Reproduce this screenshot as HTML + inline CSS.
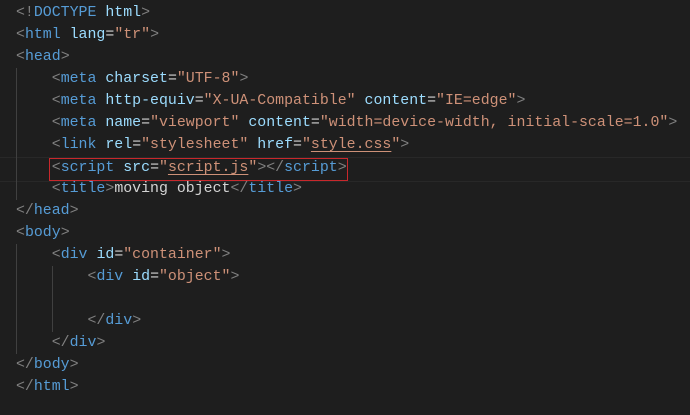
<!DOCTYPE html>
<html><head><style>
body{margin:0;width:690px;height:415px;background:#1e1e1e;overflow:hidden;position:relative;font-family:"Liberation Mono",monospace;font-size:14.9px}
.l{position:absolute;left:16px;height:22px;line-height:22px;white-space:pre;color:#d4d4d4}
.p{color:#808080}.t{color:#569cd6}.a{color:#9cdcfe}.s{color:#ce9178}
.u{text-decoration:underline;text-underline-offset:3px}
.g{position:absolute;width:1px;background:#404040}
</style></head><body>
<div style="position:absolute;left:0;top:157px;width:690px;height:23px;border-top:1px solid #282828;border-bottom:1px solid #282828"></div>
<div class="g" style="left:16px;top:68px;height:132px"></div>
<div class="g" style="left:16px;top:244px;height:110px"></div>
<div class="g" style="left:52px;top:266px;height:66px"></div>
<div class="l" style="top:2px"><span class="p">&lt;!</span><span class="t">DOCTYPE</span> <span class="a">html</span><span class="p">&gt;</span></div>
<div class="l" style="top:24px"><span class="p">&lt;</span><span class="t">html</span> <span class="a">lang</span>=<span class="s">"tr"</span><span class="p">&gt;</span></div>
<div class="l" style="top:46px"><span class="p">&lt;</span><span class="t">head</span><span class="p">&gt;</span></div>
<div class="l" style="top:68px">    <span class="p">&lt;</span><span class="t">meta</span> <span class="a">charset</span>=<span class="s">"UTF-8"</span><span class="p">&gt;</span></div>
<div class="l" style="top:90px">    <span class="p">&lt;</span><span class="t">meta</span> <span class="a">http-equiv</span>=<span class="s">"X-UA-Compatible"</span> <span class="a">content</span>=<span class="s">"IE=edge"</span><span class="p">&gt;</span></div>
<div class="l" style="top:112px">    <span class="p">&lt;</span><span class="t">meta</span> <span class="a">name</span>=<span class="s">"viewport"</span> <span class="a">content</span>=<span class="s">"width=device-width, initial-scale=1.0"</span><span class="p">&gt;</span></div>
<div class="l" style="top:134px">    <span class="p">&lt;</span><span class="t">link</span> <span class="a">rel</span>=<span class="s">"stylesheet"</span> <span class="a">href</span>=<span class="s">"<span class="u">style.css</span>"</span><span class="p">&gt;</span></div>
<div class="l" style="top:157px">    <span class="p">&lt;</span><span class="t">script</span> <span class="a">src</span>=<span class="s">"<span class="u">script.js</span>"</span><span class="p">&gt;&lt;/</span><span class="t">script</span><span class="p">&gt;</span></div>
<div class="l" style="top:178px">    <span class="p">&lt;</span><span class="t">title</span><span class="p">&gt;</span>moving object<span class="p">&lt;/</span><span class="t">title</span><span class="p">&gt;</span></div>
<div class="l" style="top:200px"><span class="p">&lt;/</span><span class="t">head</span><span class="p">&gt;</span></div>
<div class="l" style="top:222px"><span class="p">&lt;</span><span class="t">body</span><span class="p">&gt;</span></div>
<div class="l" style="top:244px">    <span class="p">&lt;</span><span class="t">div</span> <span class="a">id</span>=<span class="s">"container"</span><span class="p">&gt;</span></div>
<div class="l" style="top:266px">        <span class="p">&lt;</span><span class="t">div</span> <span class="a">id</span>=<span class="s">"object"</span><span class="p">&gt;</span></div>
<div class="l" style="top:310px">        <span class="p">&lt;/</span><span class="t">div</span><span class="p">&gt;</span></div>
<div class="l" style="top:332px">    <span class="p">&lt;/</span><span class="t">div</span><span class="p">&gt;</span></div>
<div class="l" style="top:354px"><span class="p">&lt;/</span><span class="t">body</span><span class="p">&gt;</span></div>
<div class="l" style="top:376px"><span class="p">&lt;/</span><span class="t">html</span><span class="p">&gt;</span></div>
<div style="position:absolute;z-index:5;left:49px;top:158px;width:299px;height:23px;border:1px solid #c8282c;box-sizing:border-box"></div>
</body></html>
